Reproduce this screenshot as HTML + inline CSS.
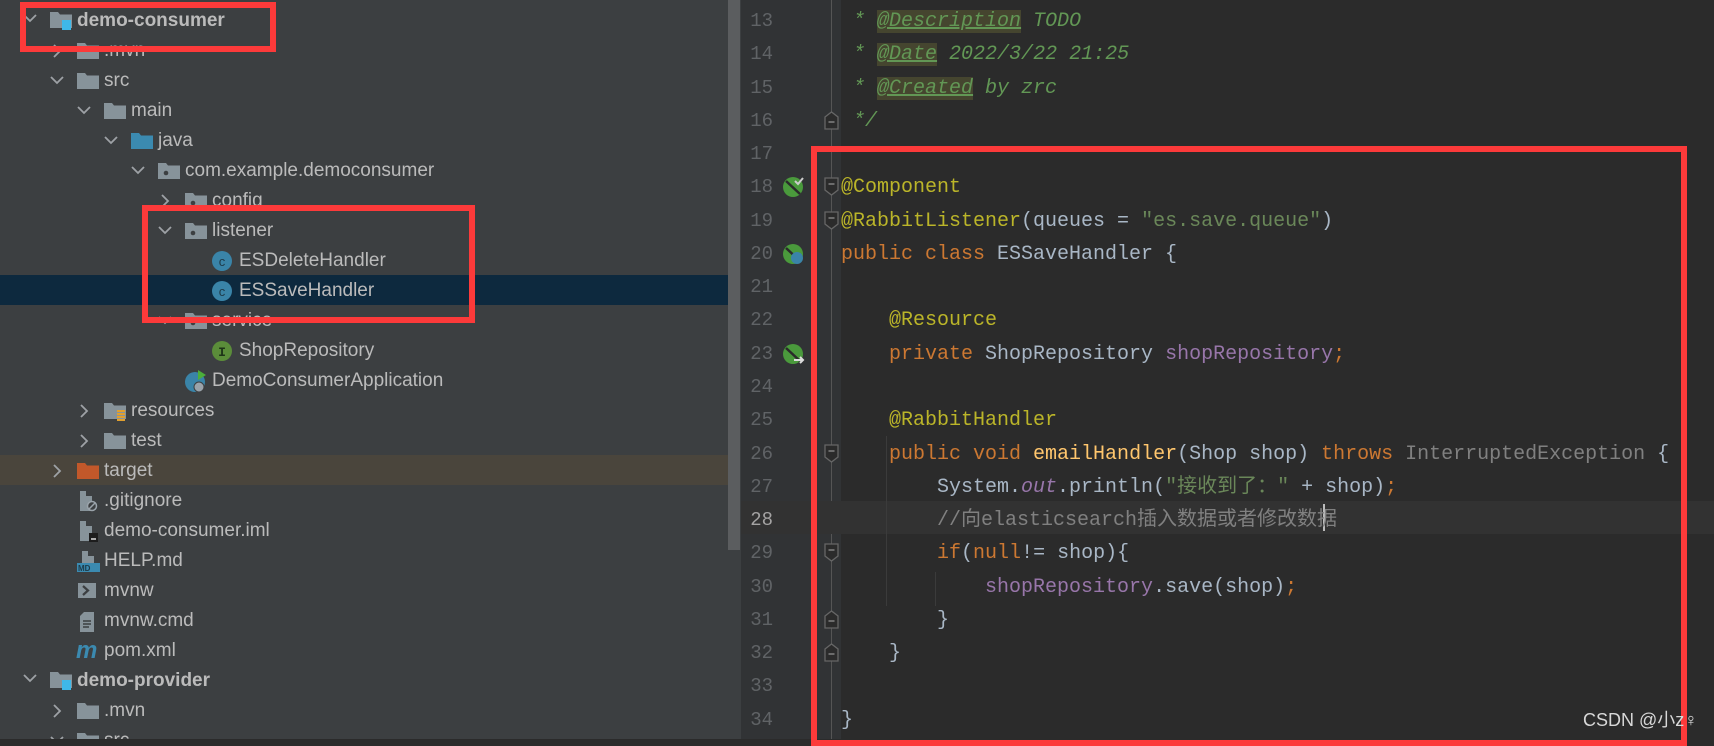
<!DOCTYPE html>
<html><head><meta charset="utf-8">
<style>
*{margin:0;padding:0;box-sizing:border-box}
body{width:1714px;height:739px;overflow:hidden;background:#2b2b2b;position:relative;font-family:"Liberation Sans","Noto Sans CJK SC",sans-serif}
#tree{position:absolute;left:0;top:0;width:741px;height:739px;background:#3c3f41;overflow:hidden}
.row{position:absolute;left:0;width:728px;height:30px}
.t{position:absolute;top:1px;line-height:30px;font-size:19px;color:#bbbbbb;white-space:nowrap}
.b{font-weight:bold}
.ic{position:absolute;top:5px}
.ch{position:absolute;top:9px}
#sb{position:absolute;left:728px;top:0;width:12px;height:550px;background:#5b5d5f}
#gut{position:absolute;left:741px;top:0;width:100px;height:739px;background:#313335}
.ln{position:absolute;left:741px;width:32px;text-align:right;font-family:"Liberation Mono",monospace;font-size:19px;color:#606366;line-height:33px}
.code{position:absolute;left:841px;font-family:"Liberation Mono","Noto Sans CJK SC",monospace;font-size:20px;line-height:33px;color:#a9b7c6;white-space:pre}
.cm{color:#629755;font-style:italic}
.tag{color:#629755;text-decoration:underline;background:#45452f;font-style:italic}
.kw{color:#cc7832}.an{color:#bbb529}.st{color:#6a8759}.fd{color:#9876aa}.md{color:#ffc66d}.gr{color:#808080}
.box{position:absolute;border:6px solid #fc3a3a}
</style></head><body>
<div id="tree">
<div class="row" style="top:275px;background:#0d293e"></div>
<div class="row" style="top:455px;background:#4a453c;width:728px"></div>
</div>
<div id="sb"></div>
<div id="gut"></div>
<div style="position:absolute;left:831px;top:0;width:1px;height:739px;background:#555"></div>
<div style="position:absolute;left:841px;top:501px;width:873px;height:33px;background:#323232"></div>
<div style="position:absolute;left:741px;top:501px;width:100px;height:33px;background:#323232"></div>
<div style="position:absolute;left:886px;top:436px;width:1px;height:170px;background:#3b3b3b"></div>
<div style="position:absolute;left:935px;top:572px;width:1px;height:34px;background:#3b3b3b"></div>
<div style="position:absolute;left:1323px;top:504px;width:2px;height:27px;background:#bbb"></div>
<div id="content"></div>

<script>
const rows=[
[0,'d','mod','demo-consumer',1],[1,'r','f','.mvn'],[1,'d','f','src'],[2,'d','f','main'],[3,'d','jf','java'],
[4,'d','p','com.example.democonsumer'],[5,'r','p','config'],[5,'d','p','listener'],[6,'','c','ESDeleteHandler'],
[6,'','c','ESSaveHandler'],[5,'d','p','service'],[6,'','i','ShopRepository'],[5,'','sc','DemoConsumerApplication'],
[2,'r','rf','resources'],[2,'r','f','test'],[1,'r','of','target'],[1,'','gi','.gitignore'],[1,'','iml','demo-consumer.iml'],
[1,'','mdf','HELP.md'],[1,'','sh','mvnw'],[1,'','txt','mvnw.cmd'],[1,'','m','pom.xml'],[0,'d','mod','demo-provider',1],
[1,'r','f','.mvn'],[1,'d','f','src']];
const fold='M1 3h8l2 2.5h12V19H1z';
const icons={
f:`<svg width="24" height="20"><path d="${fold}" fill="#87939a"/></svg>`,
jf:`<svg width="24" height="20"><path d="${fold}" fill="#3b8ab0"/></svg>`,
of:`<svg width="24" height="20"><path d="${fold}" fill="#c2582a"/></svg>`,
p:`<svg width="24" height="20"><path d="${fold}" fill="#87939a"/><circle cx="9" cy="13" r="2.3" fill="#3c3f41"/></svg>`,
rf:`<svg width="24" height="22"><path d="${fold}" fill="#87939a"/><path d="M14 11h8M14 14h8M14 17h8M14 20h8" stroke="#e0a030" stroke-width="2"/></svg>`,
mod:`<svg width="24" height="22"><path d="M1 2h8l2 2.5h12V18H1z" fill="#87939a"/><rect x="13" y="10" width="9" height="10" fill="#3fb8e8"/></svg>`,
c:`<svg width="22" height="22"><circle cx="11" cy="11" r="10" fill="#3a84a8"/><text x="11" y="16" font-size="13" text-anchor="middle" fill="#1e3a48" font-family="Liberation Sans">c</text></svg>`,
i:`<svg width="22" height="22"><circle cx="11" cy="11" r="10" fill="#5b8d3a"/><text x="11" y="16" font-size="13" text-anchor="middle" fill="#1e3418" font-family="Liberation Mono" font-weight="bold">I</text></svg>`,
sc:`<svg width="24" height="24"><circle cx="11" cy="12" r="10" fill="#3a84a8"/><path d="M14 0l8 5-8 5z" fill="#4caf3a"/><circle cx="15" cy="17" r="5" fill="#9aa3aa" stroke="#3c3f41"/></svg>`,
gi:`<svg width="24" height="22"><path d="M4 1h6v5h6v15H4z" fill="#87939a"/><circle cx="16" cy="16" r="4.5" fill="#3c3f41" stroke="#9aa3aa" stroke-width="1.5"/><path d="M13 19l6-6" stroke="#9aa3aa" stroke-width="1.5"/></svg>`,
iml:`<svg width="24" height="22"><path d="M4 1h6v5h6v15H4z" fill="#87939a"/><rect x="13" y="13" width="9" height="9" fill="#1d1d1d"/><path d="M15 19h5" stroke="#ddd" stroke-width="1.5"/></svg>`,
mdf:`<svg width="24" height="22"><path d="M6 1h6v5h6v8H6z" fill="#87939a"/><rect x="1" y="13" width="23" height="9" fill="#3b8ab0"/><text x="2" y="21" font-size="8" font-weight="bold" fill="#1e3a48" font-family="Liberation Sans">MD</text></svg>`,
sh:`<svg width="24" height="22"><rect x="2" y="3" width="18" height="15" fill="#87939a"/><path d="M7 6l5 4.5L7 15" stroke="#3c3f41" stroke-width="2.2" fill="none"/></svg>`,
txt:`<svg width="24" height="24"><path d="M8 2h10v20H4V6z" fill="#87939a"/><path d="M7 11h8M7 14h8M7 17h6" stroke="#3c3f41" stroke-width="1.4"/></svg>`,
m:`<svg width="24" height="22"><text x="0" y="18" font-size="24" font-style="italic" font-weight="bold" fill="#3b8ab0" font-family="Liberation Sans">m</text></svg>`
};
let h='';
rows.forEach((r,i)=>{
 const [L,chv,ic,txt,b]=r;const top=5+30*i;
 const cx=30+27*L, il=49+27*L, tl=77+27*L;
 let s=`<div class="row" style="top:${top}px">`;
 if(chv==='d') s+=`<svg class="ch" style="left:${cx-7}px;top:${L?11:9}px" width="14" height="9"><polyline points="1,1 7,7 13,1" fill="none" stroke="#9ea2a6" stroke-width="1.8"/></svg>`;
 if(chv==='r') s+=`<svg class="ch" style="left:${cx-4}px" width="9" height="14"><polyline points="1,1 7,7 1,13" fill="none" stroke="#9ea2a6" stroke-width="1.8"/></svg>`;
 s+=`<div class="ic" style="left:${il}px">${icons[ic]}</div>`;
 s+=`<div class="t${b?' b':''}" style="left:${tl}px">${txt}</div></div>`;
 h+=s;
});
document.getElementById('tree').insertAdjacentHTML('beforeend',h);

const code={
13:' <span class="cm">* </span><span class="tag">@Description</span><span class="cm"> TODO</span>',
14:' <span class="cm">* </span><span class="tag">@Date</span><span class="cm"> 2022/3/22 21:25</span>',
15:' <span class="cm">* </span><span class="tag">@Created</span><span class="cm"> by zrc</span>',
16:' <span class="cm">*/</span>',
17:'',
18:'<span class="an">@Component</span>',
19:'<span class="an">@RabbitListener</span>(queues = <span class="st">"es.save.queue"</span>)',
20:'<span class="kw">public class </span>ESSaveHandler {',
21:'',
22:'    <span class="an">@Resource</span>',
23:'    <span class="kw">private </span>ShopRepository <span class="fd">shopRepository</span><span class="kw">;</span>',
24:'',
25:'    <span class="an">@RabbitHandler</span>',
26:'    <span class="kw">public void </span><span class="md">emailHandler</span>(Shop shop) <span class="kw">throws </span><span class="gr">InterruptedException</span> {',
27:'        System.<span class="fd" style="font-style:italic">out</span>.println(<span class="st">"接收到了："</span> + shop)<span class="kw">;</span>',
28:'        <span class="gr">//向elasticsearch插入数据或者修改数据</span>',
29:'        <span class="kw">if</span>(<span class="kw">null</span>!= shop){',
30:'            <span class="fd">shopRepository</span>.save(shop)<span class="kw">;</span>',
31:'        }',
32:'    }',
33:'',
34:'}'};
let c='';
for(let n=13;n<=34;n++){
 const top=Math.round((n-13)*33.27)+5;
 c+=`<div class="ln" style="top:${top}px;${n==28?'color:#a4a3a3':''}">${n}</div>`;
 c+=`<div class="code" style="top:${top}px">${code[n]}</div>`;
}
[16,31,32].forEach(n=>{const y=Math.round((n-13)*33.27)+11;c+=`<svg style="position:absolute;left:824px;top:${y}px" width="16" height="20"><path d="M1 6L7.5 1 14 6V18H1z" fill="#2b2b2b" stroke="#666" stroke-width="1.3"/><path d="M4.5 11h6" stroke="#888" stroke-width="1.4"/></svg>`;});
[18,19,26,29].forEach(n=>{const y=Math.round((n-13)*33.27)+11;c+=`<svg style="position:absolute;left:824px;top:${y}px" width="16" height="20"><path d="M1 1H14V13L7.5 18 1 13z" fill="#2b2b2b" stroke="#666" stroke-width="1.3"/><path d="M4.5 7h6" stroke="#888" stroke-width="1.4"/></svg>`;});
[18,20,23].forEach(n=>{const y=Math.round((n-13)*33.27)+9;c+=`<svg style="position:absolute;left:782px;top:${y}px" width="24" height="24"><circle cx="11" cy="12" r="10" fill="#4a9a3c"/><path d="M4 6l14 13" stroke="#2b2b2b" stroke-width="2.5"/>${n==18?'<path d="M13 6l3 3 5-6" stroke="#ccc" stroke-width="2" fill="none"/>':''}${n==20?'<circle cx="15" cy="16" r="6" fill="#3a84a8"/>':''}${n==23?'<path d="M12 18h9M18 15l3 3-3 3" stroke="#ddd" stroke-width="2" fill="none"/>':''}</svg>`;});
document.getElementById('content').innerHTML=c;
</script>
<div class="box" style="left:20px;top:2px;width:256px;height:50px"></div>
<div class="box" style="left:142px;top:205px;width:333px;height:118px"></div>
<div class="box" style="left:811px;top:146px;width:876px;height:600px"></div>
<div style="position:absolute;left:1583px;top:706px;font-size:18px;color:#d8d8d8;font-family:'Liberation Sans','Noto Sans CJK SC',sans-serif;white-space:nowrap">CSDN @小z♀</div>
</body></html>
